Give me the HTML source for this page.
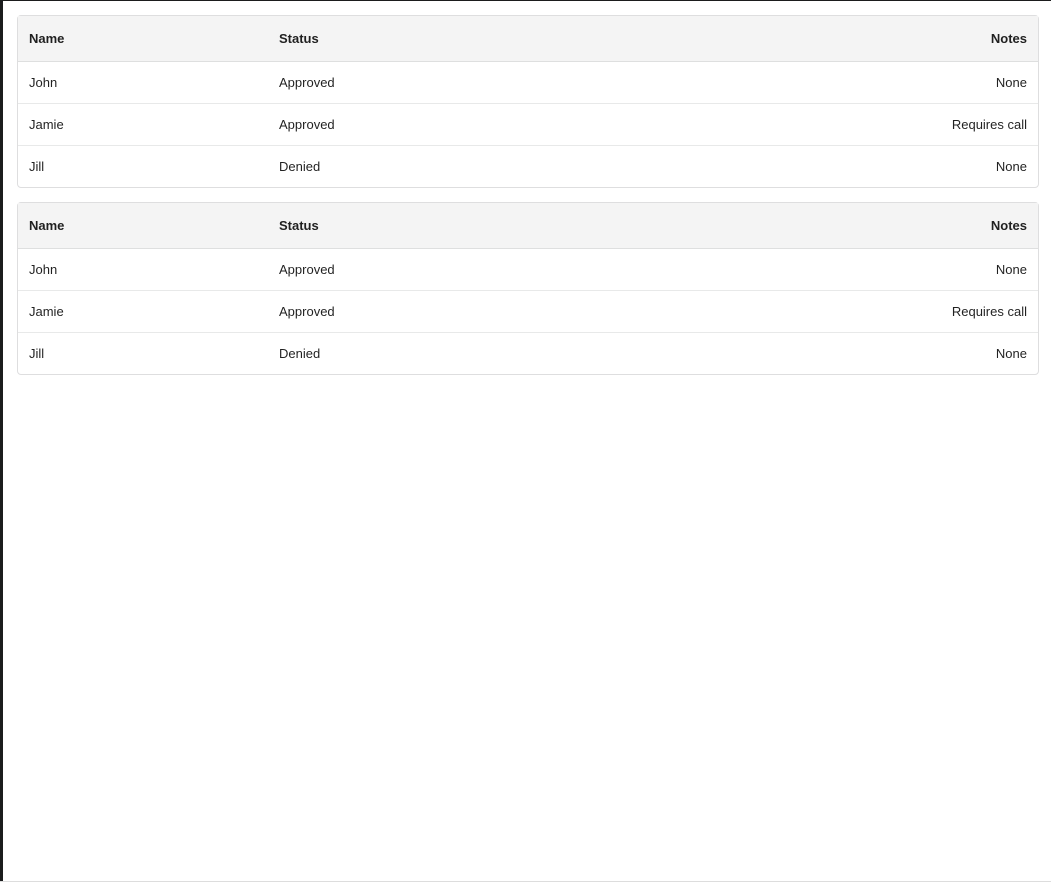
<!DOCTYPE html>
<html><head><meta charset="utf-8"><style>
html,body{margin:0;padding:0;width:1051px;height:882px;overflow:hidden;background:#fff;}
body{position:relative;font-family:"Liberation Sans",sans-serif;font-size:13px;color:rgba(0,0,0,.87);}
.edge-l{position:absolute;left:0;top:0;width:3px;height:882px;background:#1b1c1d;}
.edge-t{position:absolute;left:0;top:0;width:1051px;height:1px;background:#1b1c1d;}
.edge-b{position:absolute;left:0;bottom:0;width:1051px;height:1px;background:#ddd;}
table{position:absolute;left:17px;width:1022px;border:1px solid rgba(34,36,38,.15);border-radius:4px;border-collapse:separate;border-spacing:0;}
th{background:#f4f4f4;height:45px;text-align:left;font-weight:bold;padding:0 11px;border-bottom:1px solid rgba(34,36,38,.1);}
td{height:41px;padding:0 11px;border-top:1px solid rgba(34,36,38,.1);}
tr:nth-child(1) td{border-top:none;}
.r{text-align:right;}
.c1{width:228px;}
</style></head><body>
<div class="edge-l"></div><div class="edge-t"></div><div class="edge-b"></div>
<table style="top:15px">
<thead><tr><th class="c1">Name</th><th>Status</th><th class="r">Notes</th></tr></thead>
<tbody>
<tr><td>John</td><td>Approved</td><td class="r">None</td></tr>
<tr><td>Jamie</td><td>Approved</td><td class="r">Requires call</td></tr>
<tr><td>Jill</td><td>Denied</td><td class="r">None</td></tr>
</tbody></table>
<table style="top:202px">
<thead><tr><th class="c1">Name</th><th>Status</th><th class="r">Notes</th></tr></thead>
<tbody>
<tr><td>John</td><td>Approved</td><td class="r">None</td></tr>
<tr><td>Jamie</td><td>Approved</td><td class="r">Requires call</td></tr>
<tr><td>Jill</td><td>Denied</td><td class="r">None</td></tr>
</tbody></table>
</body></html>
